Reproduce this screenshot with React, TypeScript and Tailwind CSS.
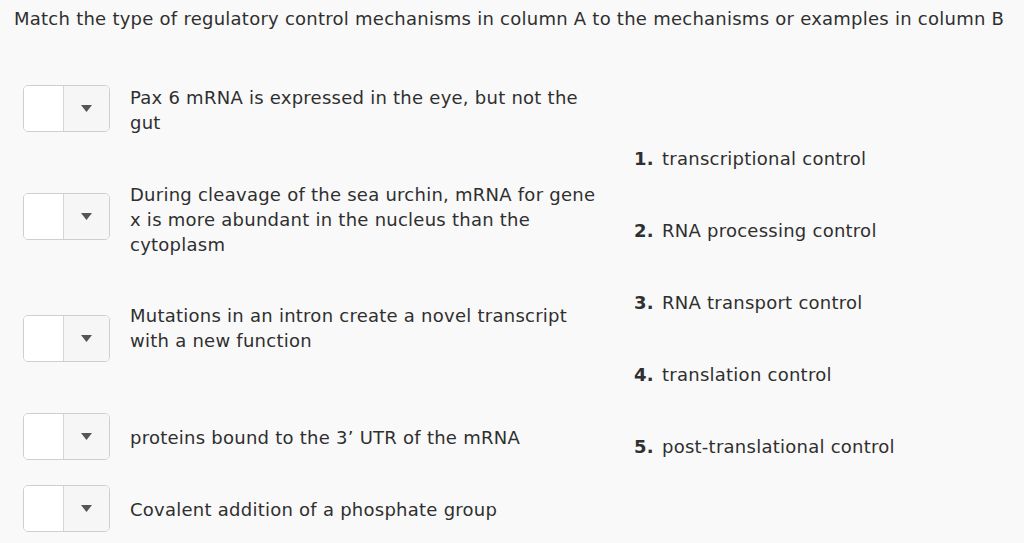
import React from "react";

type Row = { lines: string[]; mt: string; selOff: string; textOff: string };

const left: Row[] = [
  { lines: ["Pax 6 mRNA is expressed in the eye, but not the", "gut"], mt: "mt-[54px]", selOff: "mt-0", textOff: "mt-0" },
  { lines: ["During cleavage of the sea urchin, mRNA for gene", "x is more abundant in the nucleus than the", "cytoplasm"], mt: "mt-[47px]", selOff: "mt-[11px]", textOff: "mt-0" },
  { lines: ["Mutations in an intron create a novel transcript", "with a new function"], mt: "mt-[46px]", selOff: "mt-[12px]", textOff: "mt-0" },
  { lines: ["proteins bound to the 3\u2019 UTR of the mRNA"], mt: "mt-[51px]", selOff: "mt-0", textOff: "mt-[12px]" },
  { lines: ["Covalent addition of a phosphate group"], mt: "mt-[25px]", selOff: "mt-0", textOff: "mt-[12px]" },
];

const right = [
  "transcriptional control",
  "RNA processing control",
  "RNA transport control",
  "translation control",
  "post-translational control",
];

function Select({ off }: { off: string }) {
  return (
    <div className={`flex h-[47px] w-[87px] shrink-0 overflow-hidden rounded-[5px] border border-[#cfcfcf] bg-white ${off}`}>
      <div className="w-[40px] border-r border-[#d6d6d6] bg-white" />
      <div className="flex flex-1 items-center justify-center bg-[#f6f6f6]">
        <svg width="11" height="7" viewBox="0 0 11 7">
          <path d="M0 0 L11 0 L5.5 7 Z" fill="#555" />
        </svg>
      </div>
    </div>
  );
}

export default function App() {
  return (
    <div
      className="h-[543px] w-[1024px] overflow-hidden bg-[#f9f9f9] text-[#2f2f2f] text-[18px] tracking-[0.25px]"
      style={{ fontFamily: '"DejaVu Sans", Verdana, sans-serif' }}
    >
      <div className="whitespace-nowrap pl-[14px] pt-[6px] leading-[25px]">
        Match the type of regulatory control mechanisms in column A to the mechanisms or examples in column B
      </div>
      <div className="flex">
        <div className="w-[610px] pl-[23px]">
          {left.map((r, i) => (
            <div key={i} className={`flex items-start gap-[20px] ${r.mt}`}>
              <Select off={r.selOff} />
              <div className={`whitespace-nowrap leading-[25px] ${r.textOff}`}>
                {r.lines.map((l, j) => (
                  <div key={j}>{l}</div>
                ))}
              </div>
            </div>
          ))}
        </div>
        <div className="flex flex-col gap-[47px] pl-[24px] pt-[115px]">
          {right.map((t, i) => (
            <div key={i} className="flex whitespace-nowrap leading-[25px]">
              <span className="w-[28px] font-bold">{i + 1}.</span>
              <span>{t}</span>
            </div>
          ))}
        </div>
      </div>
    </div>
  );
}
